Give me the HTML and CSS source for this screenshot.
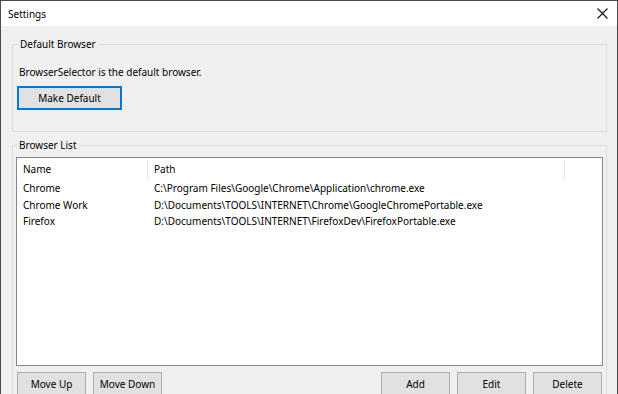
FILE: index.html
```html
<!DOCTYPE html>
<html>
<head>
<meta charset="utf-8">
<link rel="stylesheet" href="styles.css">
</head>
<body>
<div class="window">
  <div class="titlebar">
    <span class="title">Settings</span>
    <span class="close"><svg width="11" height="11" viewBox="0 0 11 11"><path d="M0.5 0.5 L10.5 10.5 M10.5 0.5 L0.5 10.5" stroke="#111" stroke-width="1.1" fill="none"/></svg></span>
  </div>
  <div class="content">
    <fieldset class="group group-default">
      <legend>Default Browser</legend>
      <p class="status">BrowserSelector is the default browser.</p>
      <button class="btn btn-default">Make Default</button>
    </fieldset>
    <fieldset class="group group-list">
      <legend>Browser List</legend>
      <div class="listview">
        <div class="lv-header">
          <div class="col col-name">Name</div>
          <div class="col col-path">Path</div>
          <div class="col col-rest"></div>
        </div>
        <div class="lv-row"><div class="cell cell-name">Chrome</div><div class="cell">C:\Program Files\Google\Chrome\Application\chrome.exe</div></div>
        <div class="lv-row"><div class="cell cell-name">Chrome Work</div><div class="cell">D:\Documents\TOOLS\INTERNET\Chrome\GoogleChromePortable.exe</div></div>
        <div class="lv-row"><div class="cell cell-name">Firefox</div><div class="cell">D:\Documents\TOOLS\INTERNET\FirefoxDev\FirefoxPortable.exe</div></div>
      </div>
      <div class="actions">
        <button class="btn">Move Up</button>
        <button class="btn">Move Down</button>
        <span class="spacer"></span>
        <button class="btn">Add</button>
        <button class="btn">Edit</button>
        <button class="btn">Delete</button>
      </div>
    </fieldset>
  </div>
</div>
</body>
</html>
```
FILE: styles.css
```css
* { box-sizing: border-box; }
html, body { margin: 0; padding: 0; }
body {
  width: 618px;
  height: 394px;
  overflow: hidden;
  font-family: "Noto Sans", "Open Sans", sans-serif;
  font-size: 10px;
  color: #000;
  background: #f0f0f0;
}
.window {
  width: 618px;
  height: 394px;
  border: 1px solid #4a4a4a;
  border-bottom: none;
  background: #f0f0f0;
  display: flex;
  flex-direction: column;
}
.titlebar {
  height: 25px;
  background: #fff;
  display: flex;
  align-items: center;
  padding-left: 7px;
  padding-right: 9px;
  flex: none;
}
.title { flex: 1; font-size: 10px; }
.close { display: flex; width: 11px; height: 11px; margin-right: 0; }
.content {
  flex: 1;
  padding: 0 10px 0 11px;
  overflow: hidden;
}
.group {
  margin: 0;
  border: 1px solid #dcdcdc;
  padding: 0 3px;
  min-width: 0;
}
.group legend {
  padding: 0 2px;
  margin-left: 1px;
  line-height: 14px;
  font-size: 10px;
}
.group-default {
  margin-top: 11px;
  padding: 0 3px 21px 4px;
}
.status {
  margin: 14px 0 0 2px;
  line-height: 14px;
}
.btn {
  font-family: inherit;
  font-size: 10px;
  color: #000;
  background: #e1e1e1;
  border: 1px solid #adadad;
  width: 69px;
  height: 24px;
  padding: 0;
  line-height: 20px;
}
.btn-default {
  margin-top: 7px;
  width: 105px;
  border: 2px solid #0078d7;
  display: block;
}
.group-list {
  margin-top: 6px;
  height: 260px;
}
.listview {
  margin-top: 5px;
  height: 209px;
  background: #fff;
  border: 1px solid #828790;
}
.lv-header {
  display: flex;
  height: 22px;
  padding-top: 2px;
}
.col {
  line-height: 18px;
  border-right: 1px solid #e5e5e5;
  padding-left: 6px;
}
.col-name { width: 131px; }
.col-path { width: 417px; }
.col-rest { border-right: none; }
.lv-row {
  display: flex;
  height: 16.5px;
  line-height: 16.5px;
}
.cell { padding-left: 6px; white-space: nowrap; }
.cell-name { width: 131px; }
.actions {
  display: flex;
  gap: 7px;
  margin-top: 6px;
  padding-left: 1px;
  padding-right: 1px;
}
.spacer { flex: 1; }
```
